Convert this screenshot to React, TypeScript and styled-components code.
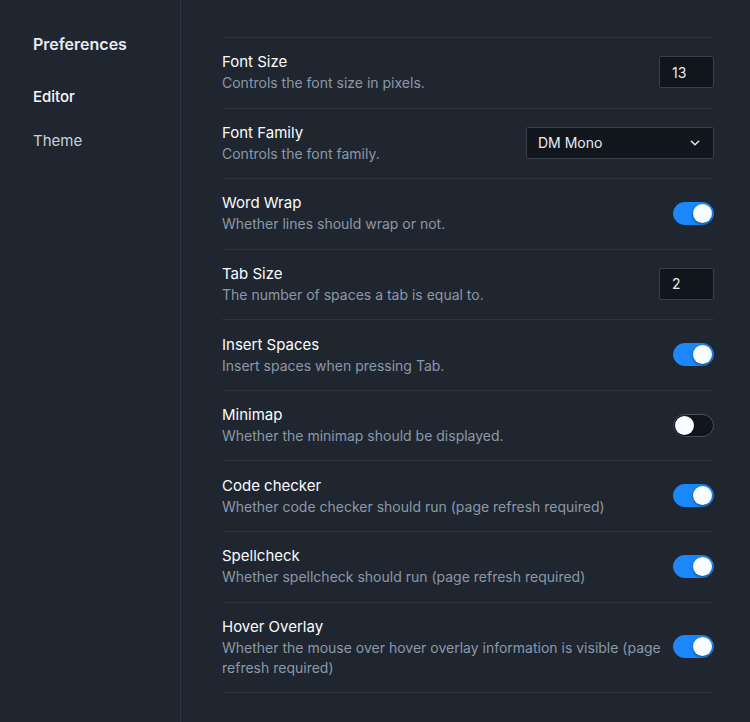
import React, { useId, useState } from "react";
import styled, { createGlobalStyle } from "styled-components";

const GlobalStyle = createGlobalStyle`
  *, *::before, *::after { box-sizing: border-box; }
  body {
    margin: 0;
    background: #20262f;
    color: #f3f6fa;
    font-family: Inter, "Liberation Sans", sans-serif;
  }
  input, select, button { font: inherit; }
`;

const Page = styled.div`
  display: flex;
  min-height: 100vh;
`;

const Sidebar = styled.aside`
  flex: 0 0 181px;
  padding: 32px 33px;
  border-right: 1px solid #2e3540;
`;

const Heading = styled.h1`
  margin: 0 0 30px;
  font-size: 16px;
  line-height: 24px;
  font-weight: 600;
  color: #e6ebf4;
`;

const Nav = styled.nav`
  display: flex;
  flex-direction: column;
  gap: 22px;
`;

const NavLink = styled.a<{ $active?: boolean }>`
  font-size: 15px;
  line-height: 22px;
  font-weight: ${(p) => (p.$active ? 500 : 400)};
  text-decoration: none;
  color: ${(p) => (p.$active ? "#fafcff" : "#c9d1dc")};
`;

const Main = styled.main`
  flex: 1;
  min-width: 0;
  display: flex;
  padding: 37px 36px 29px 41px;
`;

const Settings = styled.div`
  flex: 1;
  min-width: 0;
  display: flex;
  flex-direction: column;
  border-top: 1px solid #2c333d;
`;

const Row = styled.div`
  flex: 1 0 auto;
  display: flex;
  align-items: center;
  gap: 8px;
  padding: 13px 0 14px;
  border-bottom: 1px solid #2c333d;
`;

const RowText = styled.div`
  flex: 1;
  min-width: 0;
`;

const Title = styled.label`
  display: block;
  font-size: 15px;
  line-height: 22px;
  font-weight: 400;
  color: #fafcff;
`;

const Description = styled.p`
  margin: 0;
  font-size: 14px;
  line-height: 20px;
  color: #8b98a9;
`;

const NumberInput = styled.input`
  width: 55px;
  height: 32px;
  padding: 0 12px;
  border: 1px solid #3a404b;
  border-radius: 2px;
  background: #11151c;
  color: #e6ebf4;
  font-size: 14px;
`;

const SelectBox = styled.div`
  display: grid;
  align-items: center;
  width: 188px;
  & > * { grid-area: 1 / 1; }
  svg {
    justify-self: end;
    margin-right: 14px;
    pointer-events: none;
  }
`;

const Select = styled.select`
  appearance: none;
  width: 100%;
  height: 32px;
  padding: 0 36px 0 11px;
  border: 1px solid #3a404b;
  border-radius: 2px;
  background: #11151c;
  color: #e6ebf4;
  font-size: 14px;
`;

const Switch = styled.input`
  appearance: none;
  display: flex;
  align-items: center;
  flex: none;
  width: 41px;
  height: 23px;
  margin: 0;
  padding: 0 1px;
  border: 1px solid #4a505b;
  border-radius: 12px;
  background: #11151c;
  cursor: pointer;
  &::before {
    content: "";
    width: 19px;
    height: 19px;
    border-radius: 50%;
    background: #fafdff;
    box-shadow: 0 1px 3px rgba(0, 0, 0, 0.5);
  }
  &:checked {
    justify-content: flex-end;
    border-color: #1a88fb;
    background: #1a88fb;
  }
`;

type Control =
  | { kind: "number"; value: string }
  | { kind: "select"; options: string[] }
  | { kind: "switch"; on: boolean };

interface Setting {
  title: string;
  description: string;
  control: Control;
}

const settings: Setting[] = [
  { title: "Font Size", description: "Controls the font size in pixels.", control: { kind: "number", value: "13" } },
  { title: "Font Family", description: "Controls the font family.", control: { kind: "select", options: ["DM Mono"] } },
  { title: "Word Wrap", description: "Whether lines should wrap or not.", control: { kind: "switch", on: true } },
  { title: "Tab Size", description: "The number of spaces a tab is equal to.", control: { kind: "number", value: "2" } },
  { title: "Insert Spaces", description: "Insert spaces when pressing Tab.", control: { kind: "switch", on: true } },
  { title: "Minimap", description: "Whether the minimap should be displayed.", control: { kind: "switch", on: false } },
  { title: "Code checker", description: "Whether code checker should run (page refresh required)", control: { kind: "switch", on: true } },
  { title: "Spellcheck", description: "Whether spellcheck should run (page refresh required)", control: { kind: "switch", on: true } },
  { title: "Hover Overlay", description: "Whether the mouse over hover overlay information is visible (page refresh required)", control: { kind: "switch", on: true } },
];

function SettingControl({ id, control }: { id: string; control: Control }) {
  const [text, setText] = useState(control.kind === "number" ? control.value : "");
  if (control.kind === "number") {
    return <NumberInput id={id} inputMode="numeric" value={text} onChange={(e) => setText(e.target.value)} />;
  }
  if (control.kind === "select") {
    return (
      <SelectBox>
        <Select id={id}>
          {control.options.map((o) => (
            <option key={o}>{o}</option>
          ))}
        </Select>
        <svg width="10" height="10" viewBox="0 0 10 10" fill="none" stroke="#e6ebf4" strokeWidth="1.4" strokeLinecap="round" strokeLinejoin="round" aria-hidden="true">
          <path d="M1.3 3.2 5 6.7 8.7 3.2" />
        </svg>
      </SelectBox>
    );
  }
  return <Switch id={id} type="checkbox" role="switch" defaultChecked={control.on} />;
}

function SettingRow({ title, description, control }: Setting) {
  const id = useId();
  return (
    <Row>
      <RowText>
        <Title htmlFor={id}>{title}</Title>
        <Description>{description}</Description>
      </RowText>
      <SettingControl id={id} control={control} />
    </Row>
  );
}

export default function App() {
  return (
    <Page>
      <GlobalStyle />
      <Sidebar>
        <Heading>Preferences</Heading>
        <Nav aria-label="Preferences">
          <NavLink href="#editor" $active aria-current="page">Editor</NavLink>
          <NavLink href="#theme">Theme</NavLink>
        </Nav>
      </Sidebar>
      <Main>
        <Settings>
          {settings.map((s) => (
            <SettingRow key={s.title} {...s} />
          ))}
        </Settings>
      </Main>
    </Page>
  );
}
